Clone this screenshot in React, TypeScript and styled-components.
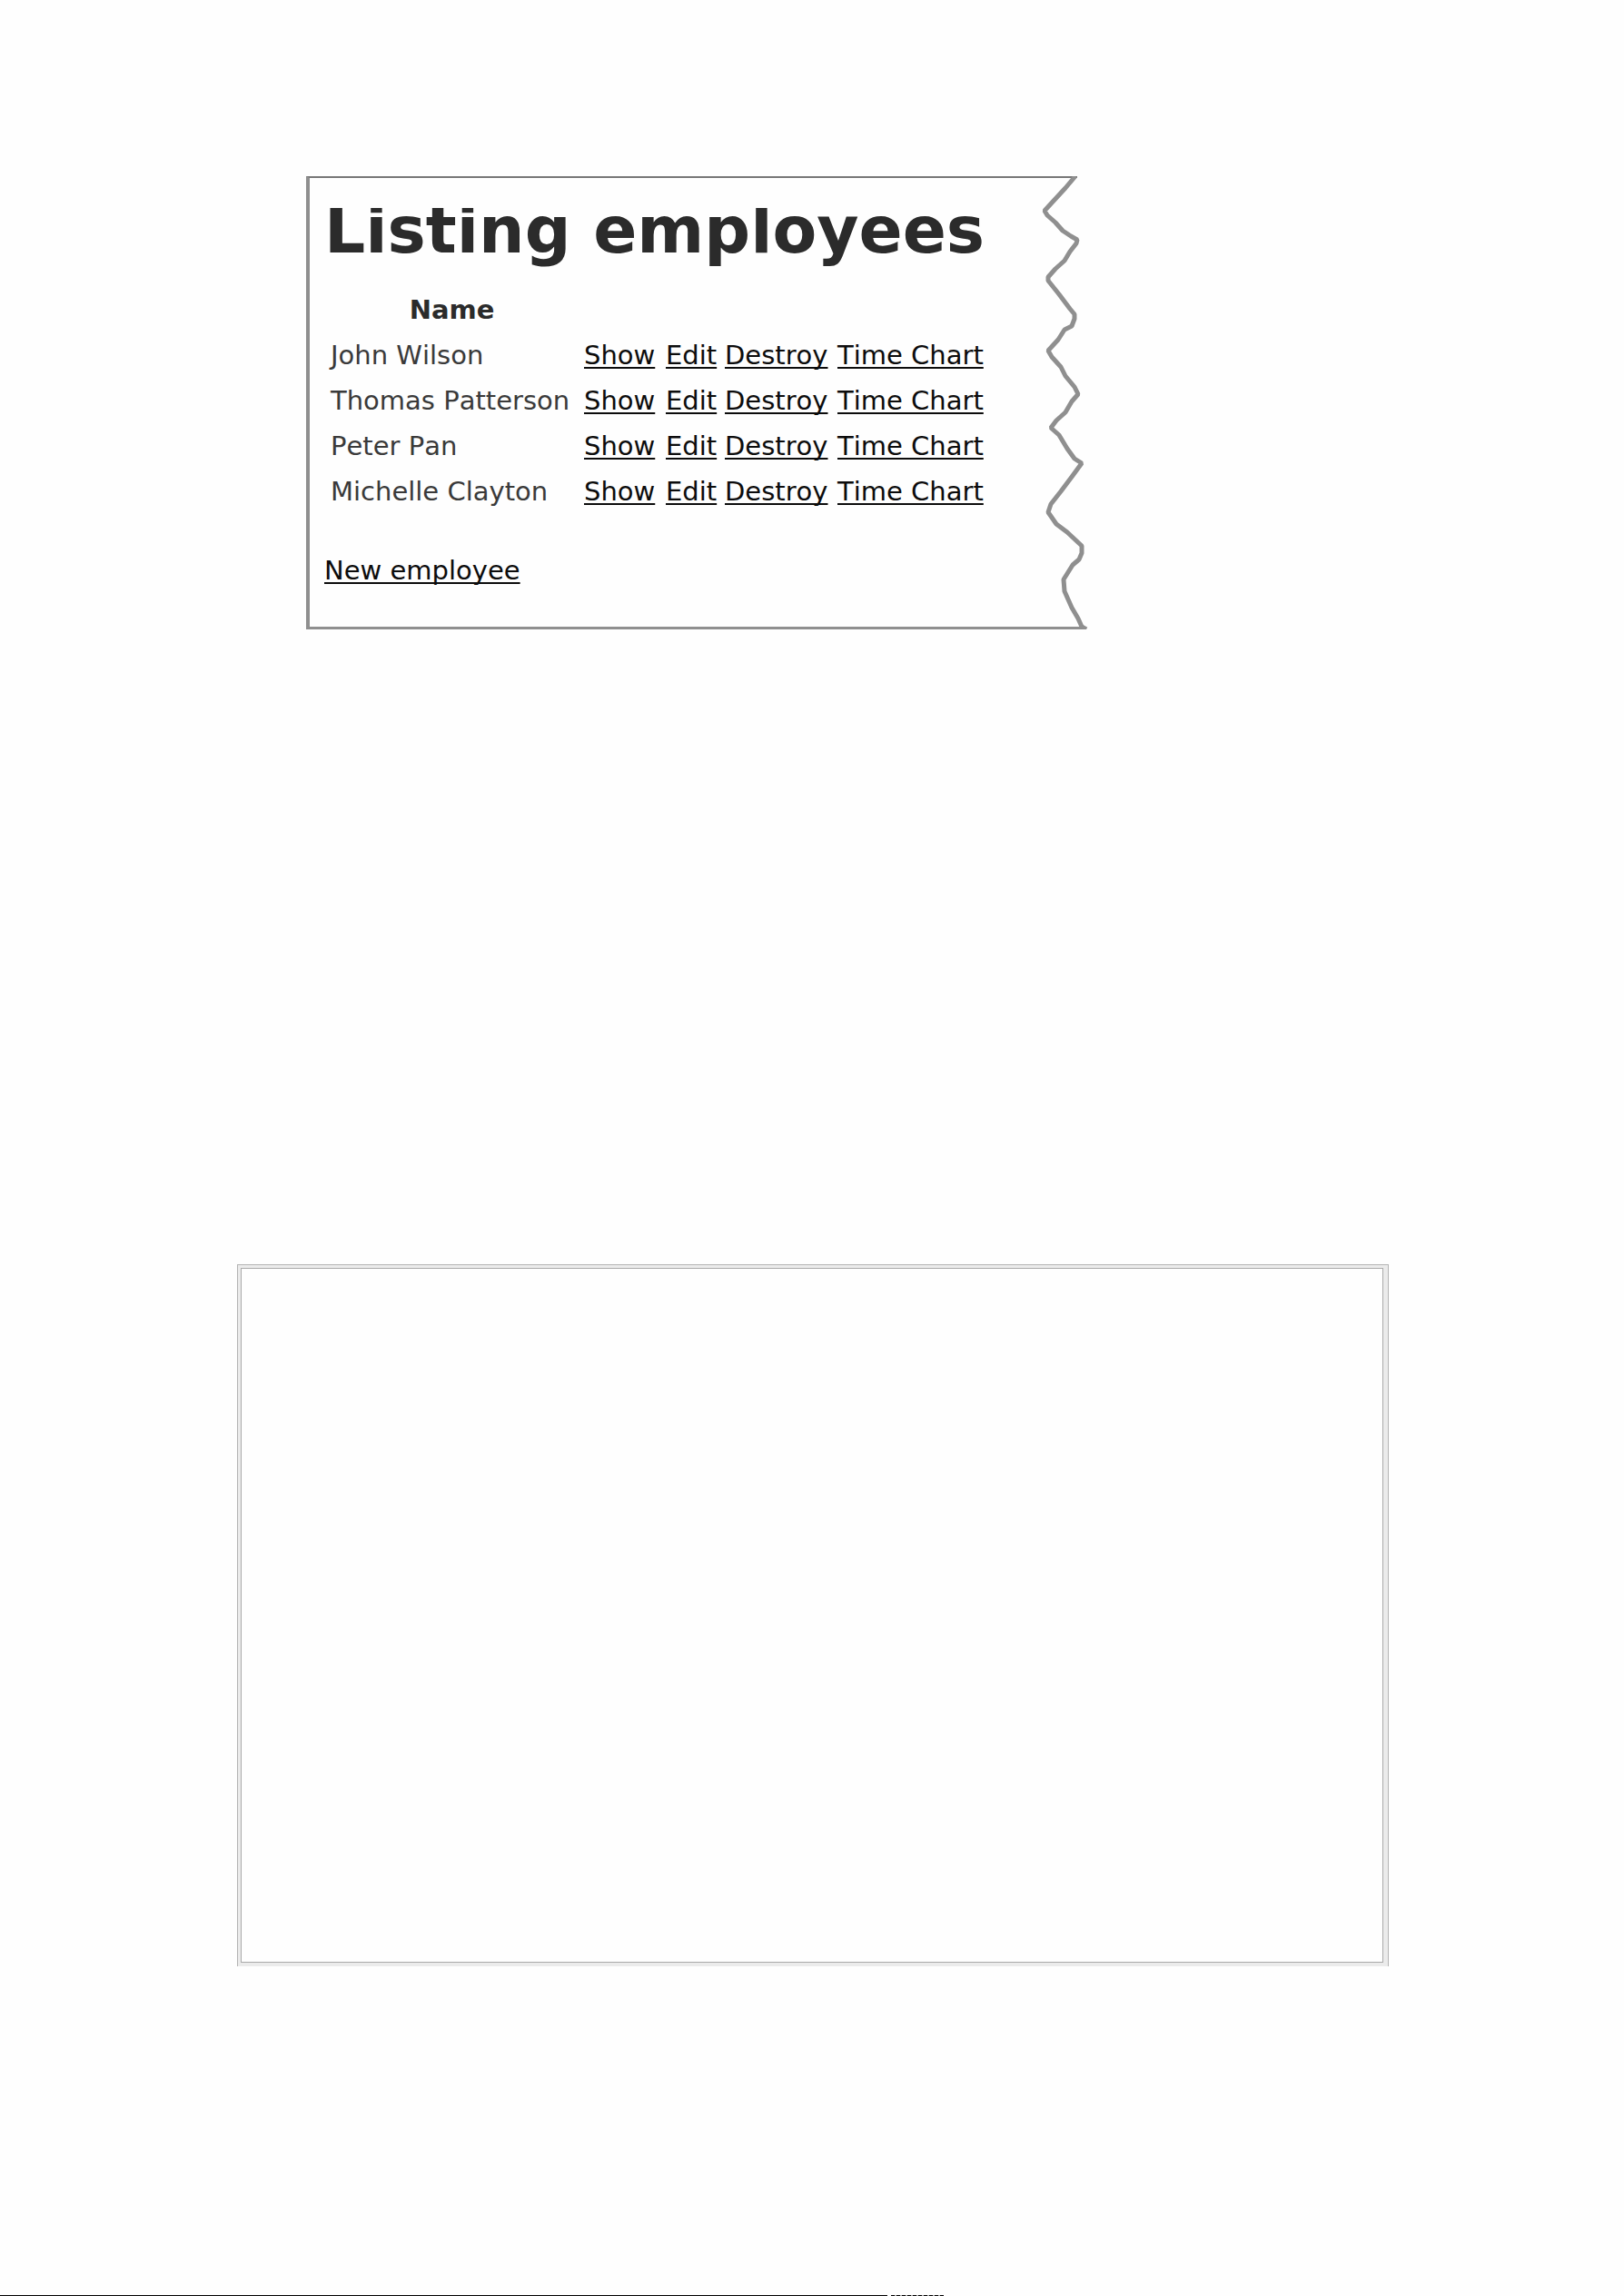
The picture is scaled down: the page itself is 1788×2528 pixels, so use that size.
import React from 'react'
import styled, { createGlobalStyle } from 'styled-components'

interface Employee {
  id: number
  name: string
}

const employees: Employee[] = [
  { id: 1, name: 'John Wilson' },
  { id: 2, name: 'Thomas Patterson' },
  { id: 3, name: 'Peter Pan' },
  { id: 4, name: 'Michelle Clayton' },
]

const actions: Record<string, string> = {
  show: 'Show',
  edit: 'Edit',
  destroy: 'Destroy',
  time_chart: 'Time Chart',
}

const columnWidths = [281, 90, 65, 124, 172]

const GlobalStyle = createGlobalStyle`
  body {
    margin: 0;
    background-color: #fefefe;
    color: #3a3a3a;
    font-family: 'DejaVu Sans', Verdana, sans-serif;
    font-size: 29px;
    line-height: 50px;
    font-kerning: none;
  }
`

const Page = styled.div`
  display: flex;
  flex-direction: column;
  box-sizing: border-box;
  min-height: 100vh;
  padding-top: 194px;
`

const Panel = styled.main`
  display: flex;
  align-self: flex-start;
  margin-left: 337px;
`

const PanelBody = styled.div`
  padding: 22px 51px 37px 16px;
  border-top: 2px solid #777;
  border-left: 4px solid #8f8f8f;
  border-bottom: 3px solid #8f8f8f;
`

const TornEdge = styled.svg`
  flex: none;
  width: 60px;
  height: 499px;
`

// the top of the heading is cut off, descenders are kept
const Title = styled.h1`
  margin: 0 0 26px;
  color: #2b2b2b;
  font-size: 71px;
  line-height: 72px;
  white-space: nowrap;
  clip-path: inset(11px -20px -10px 0);
`

const Table = styled.table`
  table-layout: fixed;
  width: 732px;
  border-collapse: collapse;
`

const Column = styled.col<{ $width: number }>`
  width: ${({ $width }) => $width}px;
`

const HeaderCell = styled.th`
  padding: 0 5px;
  color: #2b2b2b;
`

const Cell = styled.td`
  padding: 0 5px;
  white-space: nowrap;
`

const NameCell = styled(Cell)`
  padding-left: 7px;
`

const Link = styled.a`
  color: #0c0c0c;
  text-decoration: underline;
  text-decoration-thickness: 2px;
  text-decoration-skip-ink: none;
  text-underline-offset: 3px;
`

const Actions = styled.nav`
  margin-top: 37px;
`

const Frame = styled.section`
  display: flex;
  box-sizing: border-box;
  min-height: 773px;
  margin: 699px 259px 0 261px;
  padding: 3px 5px 4px 3px;
  border: 1px solid #b4b4b4;
  border-bottom: 0;
  background-color: #ebebeb;
`

const FrameBody = styled.div`
  flex: 1;
  border: 1px solid #a9a9a9;
  background-color: #fefefe;
`

const Footer = styled.footer`
  display: flex;
  gap: 4px;
  height: 1px;
  margin-top: auto;
`

const FooterRule = styled.div`
  width: 977px;
  background-color: #000;
`

const FooterDots = styled.div`
  width: 58px;
  background-image: repeating-linear-gradient(90deg, #000 0 4px, #aaa 4px 6px);
`

export default function App() {
  return (
    <>
      <GlobalStyle />
      <Page>
        <Panel>
          <PanelBody>
            <Title>{'Listing employees'}</Title>
            <Table>
              <colgroup>
                {columnWidths.map((width, i) => (
                  <Column key={i} $width={width} />
                ))}
              </colgroup>
              <thead>
                <tr>
                  <HeaderCell scope="col">{'Name'}</HeaderCell>
                </tr>
              </thead>
              <tbody>
                {employees.map(({ id, name }) => (
                  <tr key={id}>
                    <NameCell>{name}</NameCell>
                    {Object.entries(actions).map(([action, text]) => (
                      <Cell key={action}>
                        <Link href={`#/employees/${id}/${action}`}>{text}</Link>
                      </Cell>
                    ))}
                  </tr>
                ))}
              </tbody>
            </Table>
            <Actions>
              <Link href="#/employees/new">{'New employee'}</Link>
            </Actions>
          </PanelBody>
          <TornEdge viewBox="0 0 60 499" aria-hidden="true">
            <path d="M0 0H46V2H0Z" fill="#777" />
            <path d="M0 496H56V499H0Z" fill="#8f8f8f" />
            <path
              d="M44 0L33 13L21 26L10 38L13 43L22 51L30 60L39 66L46 70L45 74L38 83L32 93L22 102L14 111L14 115L26 130L38 146L43 152L43 157L40 165L32 169L25 180L14 192L18 199L28 210L33 220L43 232L47 240L40 248L33 260L23 269L17 277L26 285L35 300L43 311L51 316L40 331L28 347L17 361L14 370L23 383L35 392L51 407L51 415L48 422L41 428L36 436L31 444L32 457L40 475L47 487L51 496L56 499"
              fill="none"
              stroke="#8f8f8f"
              strokeWidth="5"
              strokeLinejoin="bevel"
            />
          </TornEdge>
        </Panel>
        <Frame>
          <FrameBody />
        </Frame>
        <Footer>
          <FooterRule />
          <FooterDots />
        </Footer>
      </Page>
    </>
  )
}
